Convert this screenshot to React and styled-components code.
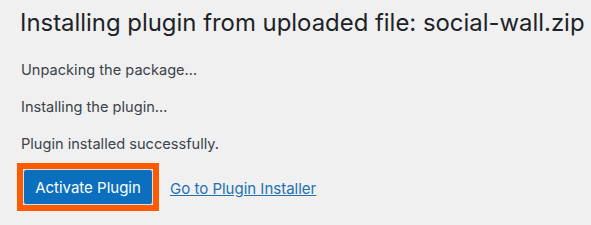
import React from "react";
import styled, { createGlobalStyle } from "styled-components";

const Global = createGlobalStyle`
  html, body { margin: 0; padding: 0; background: #f0f0f1; }
  body { font-family: Inter, "Noto Sans", sans-serif; -webkit-font-smoothing: antialiased; }
`;

const Page = styled.div`
  width: 591px;
  height: 225px;
  box-sizing: border-box;
  padding: 8px 0 0 21px;
  overflow: hidden;
  background: #f0f0f1;
  color: #1d2327;
`;

const Title = styled.h1`
  margin: 0 0 22px -1px;
  font-size: 23.9px;
  font-weight: 400;
  line-height: 30px;
  color: #1d2327;
  white-space: nowrap;
`;

const Message = styled.p`
  margin: 0 0 17px 0;
  font-size: 14.6px;
  line-height: 20px;
  color: #3c434a;
`;

const Actions = styled.div`
  display: flex;
  align-items: center;
  gap: 11px;
  margin-left: -4px;
  margin-top: -8px;
`;

const Highlight = styled.div`
  border: 6px solid #ff5a00;
  display: flex;
`;

const PrimaryButton = styled.button`
  font-family: inherit;
  font-size: 15px;
  color: #fff;
  background: #0b6fbd;
  border: 1px solid #cfe2f2;
  border-radius: 3px;
  width: 130px;
  height: 36px;
  padding: 0;
  cursor: pointer;
`;

const Link = styled.a`
  font-size: 15px;
  color: #2271b1;
  text-decoration: underline;
  margin-top: 2px;
`;

export default function App() {
  return (
    <>
      <Global />
      <Page>
        <Title>Installing plugin from uploaded file: social-wall.zip</Title>
        <Message>Unpacking the package…</Message>
        <Message>Installing the plugin…</Message>
        <Message>Plugin installed successfully.</Message>
        <Actions>
          <Highlight>
            <PrimaryButton>Activate Plugin</PrimaryButton>
          </Highlight>
          <Link href="#">Go to Plugin Installer</Link>
        </Actions>
      </Page>
    </>
  );
}
